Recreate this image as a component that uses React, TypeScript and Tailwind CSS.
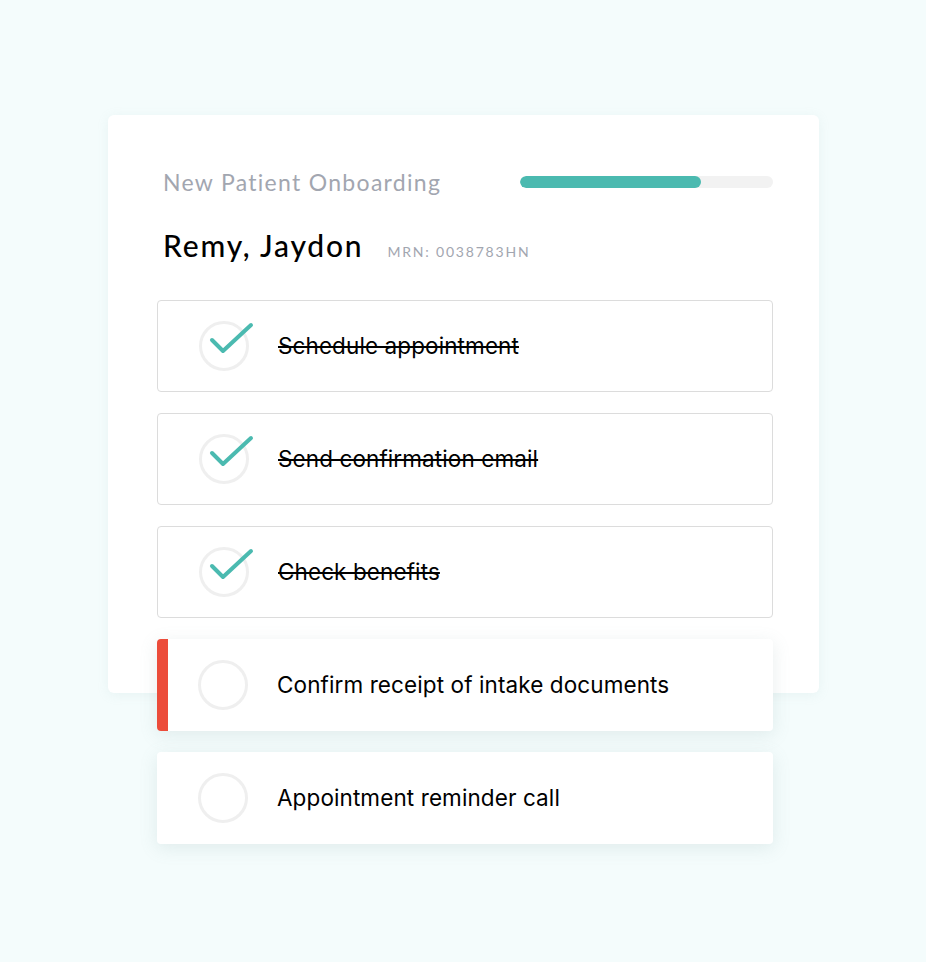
import React from "react";

type Task = { label: string; done: boolean; alert?: boolean };

const tasks: Task[] = [
  { label: "Schedule appointment", done: true },
  { label: "Send confirmation email", done: true },
  { label: "Check benefits", done: true },
  { label: "Confirm receipt of intake documents", done: false, alert: true },
  { label: "Appointment reminder call", done: false },
];

function Circle({ done }: { done: boolean }) {
  return (
    <div className="relative w-[50px] h-[50px] shrink-0">
      <div className="absolute inset-0 rounded-full border-[3px] border-[#efefef]" />
      {done && (
        <svg
          className="absolute left-[10px] top-[0px]"
          width="46"
          height="36"
          viewBox="0 0 46 36"
        >
          <path
            d="M3 19 L14 30 L42 4"
            fill="none"
            stroke="#4bbab0"
            strokeWidth="4"
            strokeLinecap="round"
            strokeLinejoin="round"
          />
        </svg>
      )}
    </div>
  );
}

function Row({ task }: { task: Task }) {
  const base =
    "relative flex items-center h-[92px] rounded-[4px] bg-white pl-[41px]";
  const cls = task.done
    ? `${base} border border-[#dcdcdc]`
    : `${base} shadow-[0_4px_18px_rgba(120,150,150,0.16)]`;
  return (
    <div className={cls}>
      {task.alert && (
        <div className="absolute left-0 top-0 bottom-0 w-[11px] rounded-l-[4px] bg-[#ec4c3a]" />
      )}
      <Circle done={task.done} />
      <span
        className={`ml-[29px] text-[22.5px] tracking-[0.1px] text-black ${
          task.done ? "line-through decoration-[1.5px]" : ""
        }`}
        style={{ fontFamily: "Inter, 'Liberation Sans', sans-serif" }}
      >
        {task.label}
      </span>
    </div>
  );
}

export default function App() {
  return (
    <div className="min-h-screen w-full bg-[#f4fcfc] pt-[115px] pl-[108px]">
      <div className="w-[711px] h-[578px] bg-white rounded-[6px] shadow-[0_2px_12px_rgba(150,180,180,0.12)] pl-[49px] pr-[46px] pt-[53px]">
        <div
          className="flex items-center justify-between pl-[6px]"
          style={{ fontFamily: "Lato, 'Noto Sans', sans-serif" }}
        >
          <span className="text-[23px] leading-[28px] text-[#a2a6b0] tracking-[1.3px]">
            New Patient Onboarding
          </span>
          <div className="w-[253px] h-[12px] rounded-full bg-[#f2f2f2] overflow-hidden">
            <div className="h-full w-[181px] rounded-full bg-[#4bbab0]" />
          </div>
        </div>
        <div
          className="flex items-baseline pl-[6px] mt-[31px]"
          style={{ fontFamily: "Lato, 'Noto Sans', sans-serif" }}
        >
          <span className="text-[30px] leading-[36px] text-black font-medium tracking-[1.8px]">
            Remy, Jaydon
          </span>
          <span className="ml-[24px] text-[14px] text-[#a2a6b0] tracking-[1.8px]">
            MRN: 0038783HN
          </span>
        </div>
        <div className="mt-[37px] flex flex-col gap-[21px]">
          {tasks.map((t) => (
            <Row key={t.label} task={t} />
          ))}
        </div>
      </div>
    </div>
  );
}
